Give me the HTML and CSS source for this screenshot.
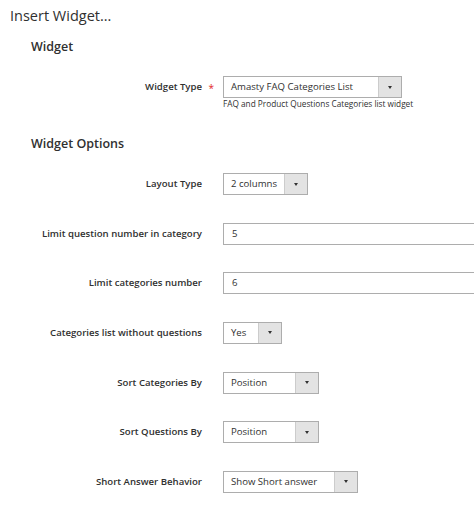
FILE: index.html
```html
<!DOCTYPE html>
<html>
<head>
<meta charset="utf-8">
<link rel="stylesheet" href="styles.css">
</head>
<body>
<div class="page">
  <h1 class="title">Insert Widget...</h1>
  <section class="section">
    <h2 class="section-title">Widget</h2>
    <div class="row row-first">
      <label class="label required">Widget Type</label>
      <div class="control">
        <div class="select w-type"><span class="sel-text">Amasty FAQ Categories List</span><span class="sel-btn"><i class="caret"></i></span></div>
        <div class="note">FAQ and Product Questions Categories list widget</div>
      </div>
    </div>
  </section>
  <section class="section">
    <h2 class="section-title options">Widget Options</h2>
    <div class="row row-first">
      <label class="label">Layout Type</label>
      <div class="control">
        <div class="select w-layout"><span class="sel-text">2 columns</span><span class="sel-btn"><i class="caret"></i></span></div>
      </div>
    </div>
    <div class="row">
      <label class="label">Limit question number in category</label>
      <div class="control"><div class="input">5</div></div>
    </div>
    <div class="row">
      <label class="label">Limit categories number</label>
      <div class="control"><div class="input">6</div></div>
    </div>
    <div class="row">
      <label class="label">Categories list without questions</label>
      <div class="control">
        <div class="select w-yes"><span class="sel-text">Yes</span><span class="sel-btn"><i class="caret"></i></span></div>
      </div>
    </div>
    <div class="row">
      <label class="label">Sort Categories By</label>
      <div class="control">
        <div class="select w-pos"><span class="sel-text">Position</span><span class="sel-btn"><i class="caret"></i></span></div>
      </div>
    </div>
    <div class="row">
      <label class="label">Sort Questions By</label>
      <div class="control">
        <div class="select w-pos"><span class="sel-text">Position</span><span class="sel-btn"><i class="caret"></i></span></div>
      </div>
    </div>
    <div class="row">
      <label class="label">Short Answer Behavior</label>
      <div class="control">
        <div class="select w-short"><span class="sel-text">Show Short answer</span><span class="sel-btn"><i class="caret"></i></span></div>
      </div>
    </div>
  </section>
</div>
</body>
</html>
```
FILE: styles.css
```css
html, body {
  margin: 0;
  padding: 0;
  background: #ffffff;
}
body {
  font-family: "Open Sans", "Liberation Sans", sans-serif;
  color: #303030;
  overflow: hidden;
}
.page {
  padding: 4px 0 0 10px;
}
.title {
  margin: 0;
  font-size: 14.5px;
  font-weight: 400;
  line-height: 24px;
  color: #303030;
}
.section {
  padding-left: 21px;
}
.section-title {
  margin: 9px 0 0 0;
  font-size: 12.5px;
  font-weight: 600;
  line-height: 20px;
  color: #303030;
}
.section-title.options {
  margin-top: 24px;
}
.row {
  display: grid;
  grid-template-columns: 171px 1fr;
  column-gap: 21px;
  align-items: start;
  margin-top: 27.67px;
}
.row-first {
  margin-top: 19px;
}
.label {
  text-align: right;
  font-size: 9.6px;
  font-weight: 600;
  line-height: 22px;
  color: #303030;
  white-space: nowrap;
  position: relative;
}
.label.required::after {
  content: "*";
  position: absolute;
  right: -12px;
  top: 1px;
  color: #e22626;
  font-weight: 400;
  font-size: 10px;
}
.control {
  display: flex;
  flex-direction: column;
  min-width: 0;
}
.select {
  display: flex;
  height: 22px;
  box-sizing: border-box;
  border: 1px solid #adadad;
  background: #fff;
}
.sel-text {
  flex: 1;
  padding-left: 7px;
  font-size: 9.6px;
  line-height: 20px;
  color: #303030;
  white-space: nowrap;
}
.sel-btn {
  width: 22px;
  background: #e3e3e3;
  border-left: 1px solid #cccccc;
  display: flex;
  align-items: center;
  justify-content: center;
}
.caret {
  width: 0;
  height: 0;
  border-left: 2.5px solid transparent;
  border-right: 2.5px solid transparent;
  border-top: 3px solid #333;
}
.w-type { width: 179px; }
.w-layout { width: 85px; }
.w-yes { width: 59px; }
.w-pos { width: 96px; }
.w-short { width: 135px; }
.input {
  height: 22px;
  box-sizing: border-box;
  border: 1px solid #adadad;
  margin-right: -6px;
  padding-left: 8px;
  font-size: 9.6px;
  line-height: 20px;
  color: #303030;
}
.note {
  margin-top: 0;
  font-size: 8.25px;
  line-height: 12px;
  color: #303030;
  white-space: nowrap;
}
```
